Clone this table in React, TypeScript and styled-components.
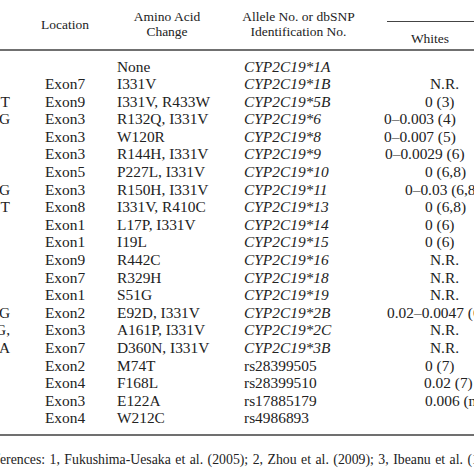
import * as React from 'react';
import styled, { createGlobalStyle } from 'styled-components';

interface Variant {
  nucleotide: string;
  location: string;
  amino: string;
  allele: string;
  italic: boolean;
  whites: string;
  indent: number;
}

const variants: Variant[] = [
  { nucleotide: '', location: '', amino: 'None', allele: 'CYP2C19*1A', italic: true, whites: '', indent: 45 },
  { nucleotide: '', location: 'Exon7', amino: 'I331V', allele: 'CYP2C19*1B', italic: true, whites: 'N.R.', indent: 50 },
  { nucleotide: 'T', location: 'Exon9', amino: 'I331V, R433W', allele: 'CYP2C19*5B', italic: true, whites: '0 (3)', indent: 45 },
  { nucleotide: 'G', location: 'Exon3', amino: 'R132Q, I331V', allele: 'CYP2C19*6', italic: true, whites: '0–0.003 (4)', indent: 4 },
  { nucleotide: '', location: 'Exon3', amino: 'W120R', allele: 'CYP2C19*8', italic: true, whites: '0–0.007 (5)', indent: 4 },
  { nucleotide: '', location: 'Exon3', amino: 'R144H, I331V', allele: 'CYP2C19*9', italic: true, whites: '0–0.0029 (6)', indent: 5 },
  { nucleotide: '', location: 'Exon5', amino: 'P227L, I331V', allele: 'CYP2C19*10', italic: true, whites: '0 (6,8)', indent: 45 },
  { nucleotide: 'G', location: 'Exon3', amino: 'R150H, I331V', allele: 'CYP2C19*11', italic: true, whites: '0–0.03 (6,8)', indent: 25 },
  { nucleotide: 'T', location: 'Exon8', amino: 'I331V, R410C', allele: 'CYP2C19*13', italic: true, whites: '0 (6,8)', indent: 45 },
  { nucleotide: '', location: 'Exon1', amino: 'L17P, I331V', allele: 'CYP2C19*14', italic: true, whites: '0 (6)', indent: 45 },
  { nucleotide: '', location: 'Exon1', amino: 'I19L', allele: 'CYP2C19*15', italic: true, whites: '0 (6)', indent: 45 },
  { nucleotide: '', location: 'Exon9', amino: 'R442C', allele: 'CYP2C19*16', italic: true, whites: 'N.R.', indent: 50 },
  { nucleotide: '', location: 'Exon7', amino: 'R329H', allele: 'CYP2C19*18', italic: true, whites: 'N.R.', indent: 50 },
  { nucleotide: '', location: 'Exon1', amino: 'S51G', allele: 'CYP2C19*19', italic: true, whites: 'N.R.', indent: 50 },
  { nucleotide: 'G', location: 'Exon2', amino: 'E92D, I331V', allele: 'CYP2C19*2B', italic: true, whites: '0.02–0.0047 (6)', indent: 7 },
  { nucleotide: 'G,', location: 'Exon3', amino: 'A161P, I331V', allele: 'CYP2C19*2C', italic: true, whites: 'N.R.', indent: 50 },
  { nucleotide: 'A', location: 'Exon7', amino: 'D360N, I331V', allele: 'CYP2C19*3B', italic: true, whites: 'N.R.', indent: 50 },
  { nucleotide: '', location: 'Exon2', amino: 'M74T', allele: 'rs28399505', italic: false, whites: '0 (7)', indent: 45 },
  { nucleotide: '', location: 'Exon4', amino: 'F168L', allele: 'rs28399510', italic: false, whites: '0.02 (7)', indent: 44 },
  { nucleotide: '', location: 'Exon3', amino: 'E122A', allele: 'rs17885179', italic: false, whites: '0.006 (n)', indent: 45 },
  { nucleotide: '', location: 'Exon4', amino: 'W212C', allele: 'rs4986893', italic: false, whites: '', indent: 45 },
];

const GlobalStyle = createGlobalStyle`
  html, body {
    margin: 0;
    padding: 0;
    background: #fff;
    overflow: hidden;
  }

  body {
    width: 474px;
    height: 474px;
  }
`;

const Sheet = styled.div`
  width: 520px;
  margin-left: -20px;
  font-family: 'Liberation Serif', 'Times New Roman', serif;
  color: #222;
`;

const Table = styled.table`
  border-collapse: collapse;
  table-layout: fixed;
  width: 500px;
  border-bottom: 2px solid #707070;
`;

const Head = styled.thead`
  border-bottom: 2px solid #707070;
`;

const HeadCell = styled.th<{ $padTop?: number }>`
  font-size: 13.5px;
  line-height: 15.5px;
  font-weight: normal;
  text-align: center;
  vertical-align: middle;
  padding: ${(p) => p.$padTop ?? 2}px 0 2px;
`;

const GroupCell = styled.th`
  height: 22px;
  padding: 0 0 0 7px;
  vertical-align: bottom;
  font-size: 13.5px;
  font-weight: normal;
`;

const GroupRule = styled.div`
  border-bottom: 1px solid #444;
  height: 0;
`;

const Row = styled.tr`
  &:first-child > td {
    padding-top: 7px;
  }

  &:last-child > td {
    padding-bottom: 7px;
  }
`;

const Cell = styled.td<{ $align?: 'left' | 'center' | 'right'; $italic?: boolean; $indent?: number }>`
  font-size: 15.4px;
  line-height: 17.6px;
  height: 17.6px;
  padding: 0 0 0 ${(p) => p.$indent ?? 0}px;
  text-align: ${(p) => p.$align ?? 'left'};
  font-style: ${(p) => (p.$italic ? 'italic' : 'normal')};
  white-space: nowrap;
  overflow: visible;
`;

const Clip = styled.td`
  font-size: 15.4px;
  line-height: 17.6px;
  text-align: right;
  padding: 0 3px 0 0;
  white-space: nowrap;
`;

const Footnote = styled.p`
  margin: 16px 0 0;
  font-size: 13.8px;
  line-height: 16px;
  word-spacing: 1px;
  white-space: nowrap;
`;

export default function App() {
  return (
    <>
      <GlobalStyle />
      <Sheet>
        <Table>
          <colgroup>
            <col style={{ width: 33 }} />
            <col style={{ width: 104 }} />
            <col style={{ width: 100 }} />
            <col style={{ width: 163 }} />
            <col style={{ width: 100 }} />
          </colgroup>
          <Head>
            <tr>
              <HeadCell rowSpan={2} />
              <HeadCell rowSpan={2}>Location</HeadCell>
              <HeadCell rowSpan={2}>
                Amino Acid
                <br />
                Change
              </HeadCell>
              <HeadCell rowSpan={2}>
                Allele No. or dbSNP
                <br />
                Identification No.
              </HeadCell>
              <GroupCell>
                <GroupRule />
              </GroupCell>
            </tr>
            <tr>
              <HeadCell $padTop={9}>Whites</HeadCell>
            </tr>
          </Head>
          <tbody>
            {variants.map((v, i) => (
              <Row key={i}>
                <Clip>{v.nucleotide}</Clip>
                <Cell $align="center">{v.location}</Cell>
                <Cell $indent={0}>{v.amino}</Cell>
                <Cell $indent={27} $italic={v.italic}>
                  {v.allele}
                </Cell>
                <Cell $indent={v.indent}>{v.whites}</Cell>
              </Row>
            ))}
          </tbody>
        </Table>
        <Footnote>
          References: 1, Fukushima-Uesaka et al. (2005); 2, Zhou et al. (2009); 3, Ibeanu et al. (1998)
        </Footnote>
      </Sheet>
    </>
  );
}
